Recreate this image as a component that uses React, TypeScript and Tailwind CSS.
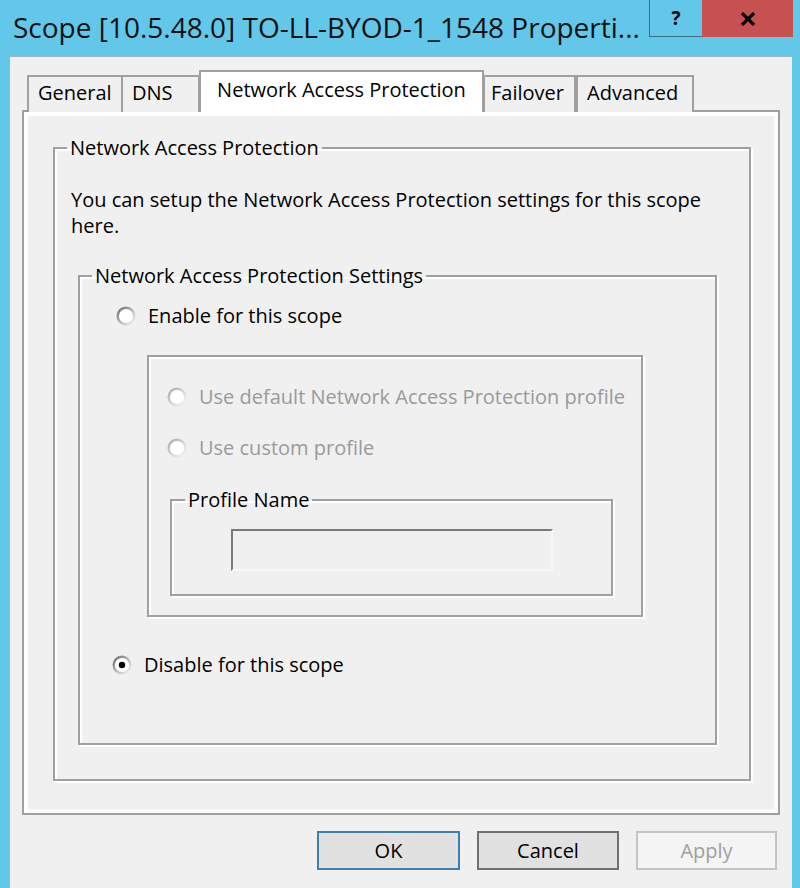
import React, { useId } from "react";

const FONT = "font-['Open_Sans','Noto_Sans',sans-serif]";

function Radio({ checked = false, disabled = false }: { checked?: boolean; disabled?: boolean }) {
  const id = useId();
  return (
    <svg width="20" height="20" viewBox="0 0 20 20" className="shrink-0">
      <defs>
        <linearGradient id={id} x1="0" y1="0" x2="1" y2="1">
          <stop offset="0" stopColor={disabled ? "#a8a8a8" : "#6a6a6a"} />
          <stop offset="0.55" stopColor={disabled ? "#d8d8d8" : "#bdbdbd"} />
          <stop offset="1" stopColor="#f4f4f4" />
        </linearGradient>
      </defs>
      <circle cx="10" cy="10" r="8.3" fill="#fff" stroke={`url(#${id})`} strokeWidth="2.4" />
      {checked && <circle cx="10" cy="10" r="3.2" fill="#000" />}
    </svg>
  );
}

function RadioRow({ label, checked, disabled, className = "" }: { label: string; checked?: boolean; disabled?: boolean; className?: string }) {
  return (
    <div className={`flex h-[26px] items-center ${className}`}>
      <Radio checked={checked} disabled={disabled} />
      <span className={`ml-[12px] leading-[26px] ${disabled ? "text-[#9a9a9a]" : "text-black"}`}>{label}</span>
    </div>
  );
}

function Group({ label, legendLeft, className = "", children }: { label: string; legendLeft: string; className?: string; children: React.ReactNode }) {
  return (
    <fieldset className={`border-2 border-[#a0a0a0] shadow-[2px_2px_0_#fff,inset_2px_2px_0_#fff] ${className}`}>
      <legend className={`${legendLeft} px-[3px] leading-[24px] text-black`}>{label}</legend>
      {children}
    </fieldset>
  );
}

const TABS = [
  { name: "General", w: "w-[96px] pl-[9px]" },
  { name: "DNS", w: "w-[79px] pl-[9px] -ml-[2px]" },
  { name: "Network Access Protection", w: "w-[285px]", active: true },
  { name: "Failover", w: "w-[93px] pl-[6px] -ml-[1px]" },
  { name: "Advanced", w: "w-[118px] pl-[9px]" },
];

export default function App() {
  return (
    <div className={`w-[800px] h-[888px] bg-[#62c7e9] flex flex-col overflow-hidden ${FONT} text-[20px]`}>
      {/* title bar */}
      <div className="h-[56px] flex items-start shrink-0">
        <div className="pl-[13px] pt-[9px] text-[28px] leading-[36px] text-[#111] whitespace-nowrap flex-1">
          Scope [10.5.48.0] TO-LL-BYOD-1_1548 Properti...
        </div>
        <div className="w-[53px] h-[37px] border-l border-b border-[#3a6f86] flex items-center justify-center text-[19px] font-bold text-black">
          ?
        </div>
        <div className="w-[91px] h-[37px] bg-[#c75050] flex items-center justify-center mr-[7px]">
          <svg width="16" height="14" viewBox="0 0 16 14">
            <path d="M2 1 L14 13 M14 1 L2 13" stroke="#000" strokeWidth="3.2" />
          </svg>
        </div>
      </div>

      {/* client area */}
      <div className="ml-[10px] w-[782px] flex-1 bg-[#f0f0f0] border-t border-[#9bb7c4] flex flex-col">
        {/* tabs */}
        <div className="flex items-end ml-[17px] mt-[13px] h-[42px] relative z-10 -mb-[2px]">
          {TABS.map((t) =>
            t.active ? (
              <div key={t.name} className={`${t.w} h-[42px] bg-white border-2 border-b-0 border-[#a0a0a0] -ml-[1px] flex items-start justify-center pt-[5px] leading-[26px]`}>
                {t.name}
              </div>
            ) : (
              <div key={t.name} className={`${t.w} h-[37px] bg-[#f0f0f0] border-2 border-b-0 border-[#a0a0a0] flex items-start pt-[3px] leading-[26px]`}>
                {t.name}
              </div>
            )
          )}
        </div>

        {/* tab panel */}
        <div className="ml-[12px] w-[758px] h-[705px] border-2 border-[#a0a0a0] shadow-[inset_4px_4px_0_#fff,inset_-4px_-4px_0_#fbfbfb] pt-[24px] pr-[27px] pl-[29px]">
          <Group label="Network Access Protection" legendLeft="ml-[12px]">
            <div className="px-[16px] pt-[27px] pb-[34px]">
              <p className="leading-[26px] text-black">
                You can setup the Network Access Protection settings for this scope here.
              </p>
              <Group label="Network Access Protection Settings" legendLeft="ml-[12px]" className="mt-[25px] ml-[7px] mr-[16px]">
                <div className="pt-[15px] pb-[65px]">
                  <RadioRow label="Enable for this scope" className="pl-[36px]" />
                  <div className="mt-[26px] ml-[67px] mr-[72px] border-2 border-[#a0a0a0] shadow-[2px_2px_0_#fff,inset_2px_2px_0_#fff] pt-[27px] pb-[19px]">
                    <RadioRow label="Use default Network Access Protection profile" disabled className="pl-[18px]" />
                    <RadioRow label="Use custom profile" disabled className="pl-[18px] mt-[25px]" />
                    <Group label="Profile Name" legendLeft="ml-[13px]" className="mt-[27px] ml-[21px] mr-[28px]">
                      <div className="pt-[17px] pb-[23px] pl-[59px]">
                        <div className="w-[322px] h-[42px] bg-[#f0f0f0] border-2 border-t-[#7a7a7a] border-l-[#7a7a7a] border-b-[#f7f7f7] border-r-[#f7f7f7]" />
                      </div>
                    </Group>
                  </div>
                  <RadioRow label="Disable for this scope" checked className="pl-[32px] mt-[35px]" />
                </div>
              </Group>
            </div>
          </Group>
        </div>

        {/* buttons */}
        <div className="flex justify-end gap-[17px] mt-[16px] pr-[15px]">
          <button className="w-[143px] h-[39px] bg-[#e1e1e1] border-2 border-[#3c7fb1] text-black leading-none">OK</button>
          <button className="w-[142px] h-[39px] bg-[#e1e1e1] border-2 border-[#707070] text-black leading-none">Cancel</button>
          <button className="w-[141px] h-[39px] bg-[#f4f4f4] border-2 border-[#c4c4c4] text-[#a0a0a0] leading-none">Apply</button>
        </div>
      </div>
    </div>
  );
}
